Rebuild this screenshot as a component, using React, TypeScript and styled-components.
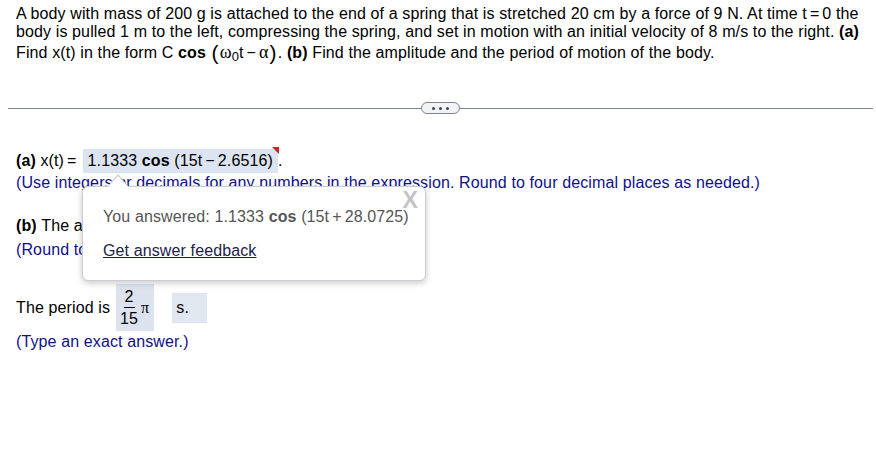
import React from "react";
import styled, { createGlobalStyle } from "styled-components";

const GlobalStyle = createGlobalStyle`
  html, body {
    margin: 0;
    padding: 0;
    background: #ffffff;
  }
  body {
    font-family: "Liberation Sans", Arial, sans-serif;
    font-size: 16px;
    letter-spacing: 0.12px;
    color: #000;
  }
`;

const App: React.FC = () => {
  return (
    <>
      <GlobalStyle />
      <Page>
        <Question>
          A body with mass of 200 g is attached to the end of a spring that is
          stretched 20 cm by a force of 9 N. At time t<Op>=</Op>0 the body is
          pulled 1 m to the left, compressing the spring, and set in motion with
          an initial velocity of 8 m/s to the right. <b>(a)</b> Find x(t) in the
          form C <b>cos</b> <Paren>(</Paren>
          <Greek>ω</Greek>
          <Sub>0</Sub>t<Op>−</Op>
          <Greek>α</Greek>
          <Paren>)</Paren>. <b>(b)</b> Find the amplitude and the period of
          motion of the body.
        </Question>

        <Divider>
          <Line />
          <MoreButton>
            <Dot />
            <Dot />
            <Dot />
          </MoreButton>
          <Line />
        </Divider>

        <Answers>
          <AnswerRow>
            <b>(a)</b>&nbsp;x(t)<Op>=</Op>
            <AnswerBox>
              1.1333 <b>cos</b>&nbsp;(15t<Op>−</Op>2.6516)
              <Flag />
            </AnswerBox>
            .
          </AnswerRow>
          <Hint $gap={1}>
            (Use integers or decimals for any numbers in the expression. Round
            to four decimal places as needed.)
          </Hint>

          <AnswerRow $gap={22}>
            <b>(b)</b>&nbsp;The amplitude is
          </AnswerRow>
          <Hint $gap={3}>(Round to four decimal places as needed.)</Hint>

          <PeriodRow>
            The period is
            <FractionBox>
              <Fraction>
                <Num>2</Num>
                <Den>15</Den>
              </Fraction>
              <Pi>π</Pi>
            </FractionBox>
            <UnitBox>s.</UnitBox>
          </PeriodRow>
          <Hint $gap={2}>(Type an exact answer.)</Hint>

          <Popover>
            <CloseX>X</CloseX>
            <Answered>
              You answered: 1.1333 <b>cos</b>&nbsp;(15t<Op>+</Op>28.0725)
            </Answered>
            <FeedbackLink href="#">Get answer feedback</FeedbackLink>
          </Popover>
        </Answers>
      </Page>
    </>
  );
};

export default App;

const Page = styled.div`
  width: 876px;
  height: 460px;
  overflow: hidden;
`;

const Question = styled.p`
  margin: 0;
  padding: 5px 12px 0 16px;
  line-height: 18.4px;
`;

const Op = styled.span`
  padding: 0 3px;
`;

const Paren = styled.span`
  font-size: 21px;
  font-weight: 300;
  position: relative;
  top: 2px;
  padding: 0 1px;
`;

const Greek = styled.span`
  font-family: "Liberation Serif", "Times New Roman", serif;
  font-size: 18px;
`;

const Sub = styled.sub`
  font-size: 13px;
  vertical-align: -3px;
`;

const Divider = styled.div`
  display: flex;
  align-items: center;
  margin: 36px 3px 0 8px;
  height: 12px;
`;

const Line = styled.div`
  flex: 1;
  height: 1px;
  background: #7b8591;
`;

const MoreButton = styled.div`
  width: 37px;
  height: 10px;
  border: 1px solid #7b8591;
  border-radius: 6px;
  background: #f1f3f6;
  display: flex;
  align-items: center;
  justify-content: center;
  gap: 4px;
`;

const Dot = styled.span`
  width: 3px;
  height: 3px;
  border-radius: 50%;
  background: #3c4652;
`;

const Answers = styled.div`
  position: relative;
  padding: 0 16px;
  margin-top: 35px;
`;

const AnswerRow = styled.div<{ $gap?: number }>`
  display: flex;
  align-items: center;
  height: 24px;
  margin-top: ${(p) => p.$gap ?? 0}px;
  white-space: pre;
`;

const AnswerBox = styled.span`
  position: relative;
  display: inline-flex;
  align-items: center;
  height: 24px;
  margin-left: 3px;
  padding: 0 5px;
  background: #dce4f1;
`;

const Flag = styled.span`
  position: absolute;
  top: -2px;
  right: -1px;
  width: 0;
  height: 0;
  border-top: 7px solid #d22020;
  border-left: 7px solid transparent;
`;

const Hint = styled.div<{ $gap?: number }>`
  color: #10108a;
  line-height: 18px;
  margin-top: ${(p) => p.$gap ?? 3}px;
`;

const PeriodRow = styled.div`
  display: flex;
  align-items: center;
  margin-top: 25px;
  gap: 6px;
`;

const FractionBox = styled.div`
  display: flex;
  align-items: center;
  height: 47px;
  padding: 0 5px 0 3px;
  background: #dce3ef;
`;

const Fraction = styled.div`
  display: flex;
  flex-direction: column;
  align-items: center;
  line-height: 17px;
`;

const Num = styled.span`
  padding: 0 1px 2px;
  border-bottom: 1px solid #000;
`;

const Den = styled.span`
  padding: 2px 1px 0;
`;

const Pi = styled.span`
  font-family: "Liberation Serif", "Times New Roman", serif;
  font-size: 16px;
  margin-left: 2px;
`;

const UnitBox = styled.div`
  display: flex;
  align-items: center;
  width: 31px;
  height: 30px;
  padding-left: 4px;
  margin-left: 12px;
  background: #e1e7f0;
`;

const Popover = styled.div`
  position: absolute;
  left: 82px;
  top: 37px;
  width: 344px;
  height: 95px;
  box-sizing: border-box;
  padding: 21px 20px 0 20px;
  background: #fff;
  border: 1px solid #c9ccd1;
  border-radius: 6px;
  box-shadow: 0 2px 6px rgba(0, 0, 0, 0.22);

  &::before,
  &::after {
    content: "";
    position: absolute;
    left: 24px;
    width: 0;
    height: 0;
    border-left: 11px solid transparent;
    border-right: 11px solid transparent;
  }
  &::before {
    top: -13px;
    border-bottom: 13px solid #c9ccd1;
  }
  &::after {
    top: -11px;
    border-bottom: 12px solid #fff;
  }
`;

const CloseX = styled.span`
  position: absolute;
  top: 0px;
  right: 7px;
  font-size: 23px;
  font-weight: bold;
  color: #c4c4c4;
`;

const Answered = styled.div`
  color: #555;
  line-height: 18px;
  white-space: nowrap;
`;

const FeedbackLink = styled.a`
  display: inline-block;
  margin-top: 16px;
  color: #1c2347;
  text-decoration: underline;
  line-height: 18px;
`;
